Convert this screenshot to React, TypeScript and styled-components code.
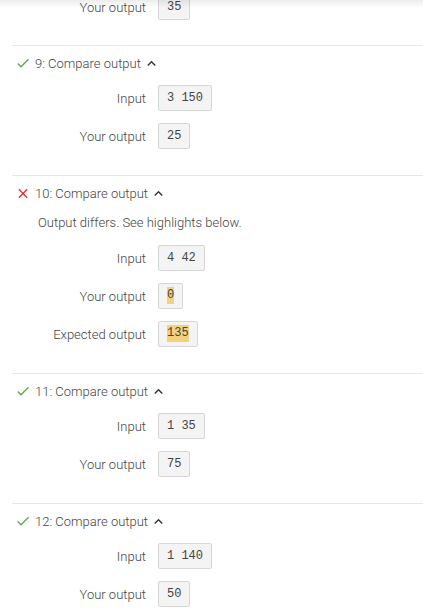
import styled, { createGlobalStyle } from "styled-components";

type Row = { label: string; value: string; highlight?: boolean };

interface TestCase {
  id: number;
  passed: boolean;
  message?: string;
  rows: Row[];
}

const tests: TestCase[] = [
  {
    id: 9,
    passed: true,
    rows: [
      { label: "Input", value: "3 150" },
      { label: "Your output", value: "25" },
    ],
  },
  {
    id: 10,
    passed: false,
    message: "Output differs. See highlights below.",
    rows: [
      { label: "Input", value: "4 42" },
      { label: "Your output", value: "0", highlight: true },
      { label: "Expected output", value: "135", highlight: true },
    ],
  },
  {
    id: 11,
    passed: true,
    rows: [
      { label: "Input", value: "1 35" },
      { label: "Your output", value: "75" },
    ],
  },
  {
    id: 12,
    passed: true,
    rows: [
      { label: "Input", value: "1 140" },
      { label: "Your output", value: "50" },
    ],
  },
];

const CheckIcon = () => (
  <svg width="16" height="16" viewBox="0 0 24 24">
    <path d="M9 16.17L4.83 12l-1.42 1.41L9 19 21 7l-1.41-1.41z" fill="#5cae4f" />
  </svg>
);

const CrossIcon = () => (
  <svg width="17" height="17" viewBox="0 0 24 24">
    <path
      d="M19 6.41L17.59 5 12 10.59 6.41 5 5 6.41 10.59 12 5 17.59 6.41 19 12 13.41 17.59 19 19 17.59 13.41 12z"
      fill="#ec2b2b"
    />
  </svg>
);

const ChevronUp = () => (
  <svg width="17" height="17" viewBox="0 0 24 24">
    <path d="M7.41 15.41L12 10.83l4.59 4.58L18 14l-6-6-6 6z" fill="#333" />
  </svg>
);

function ResultRows({ rows }: { rows: Row[] }) {
  return (
    <RowGrid>
      {rows.map((r) => [
        <RowLabel key={r.label + "-l"}>{r.label}</RowLabel>,
        <ValueBox key={r.label + "-v"}>
          {r.highlight ? <Mark>{r.value}</Mark> : r.value}
        </ValueBox>,
      ])}
    </RowGrid>
  );
}

export default function App() {
  return (
    <>
      <GlobalStyle />
      <TopShadow />
      <Page>
        {/* 위에서 잘린 이전 테스트의 마지막 줄 */}
        <Tail>
          <ResultRows rows={[{ label: "Your output", value: "35" }]} />
        </Tail>
        {tests.map((t) => (
          <Section key={t.id}>
            <Header>
              <IconSlot>{t.passed ? <CheckIcon /> : <CrossIcon />}</IconSlot>
              <HeaderText>{t.id}: Compare output</HeaderText>
              <ChevronUp />
            </Header>
            {t.message && <Message>{t.message}</Message>}
            <ResultRows rows={t.rows} />
          </Section>
        ))}
      </Page>
    </>
  );
}

const GlobalStyle = createGlobalStyle`
  body {
    margin: 0;
    background: #fff;
    font-family: Roboto, "Liberation Sans", Arial, sans-serif;
    font-size: 13px;
    font-weight: 300;
    color: #444;
    overflow: hidden;
  }
`;

const TopShadow = styled.div`
  position: fixed;
  top: 0;
  left: 0;
  right: 0;
  height: 8px;
  background: linear-gradient(rgba(0, 0, 0, 0.07), rgba(0, 0, 0, 0));
  pointer-events: none;
`;

const Page = styled.div`
  width: 100%;
  margin-top: -6px;
`;

const Tail = styled.div`
  margin-left: 12px;
  padding: 0 0 25px 3px;

  & > div {
    margin-top: 0;
  }
`;

const Section = styled.div`
  margin-left: 12px;
  border-top: 1px solid #e6e6e6;
  padding: 7px 0 26px 3px;
`;

const Header = styled.div`
  display: flex;
  align-items: center;
  height: 20px;
`;

const IconSlot = styled.span`
  display: flex;
  align-items: center;
  justify-content: center;
  width: 16px;
  margin-right: 4px;
`;

const HeaderText = styled.span`
  margin-right: 2px;
`;

const Message = styled.div`
  margin-top: 10px;
  padding-left: 23px;
  line-height: 20px;
`;

const RowGrid = styled.div`
  display: grid;
  grid-template-columns: 131px auto;
  column-gap: 12px;
  row-gap: 12px;
  margin-top: 12px;
`;

const RowLabel = styled.div`
  text-align: right;
  align-self: center;
`;

const ValueBox = styled.div`
  justify-self: start;
  box-sizing: border-box;
  height: 26px;
  line-height: 24px;
  padding: 0 8px;
  border: 1px solid #d6d6d6;
  border-radius: 2px;
  background: #f4f4f4;
  font-family: "Liberation Mono", "Courier New", monospace;
  font-size: 12px;
  font-weight: 400;
  color: #444;
  white-space: pre;
`;

const Mark = styled.span`
  display: inline-block;
  height: 17px;
  line-height: 17px;
  vertical-align: middle;
  background: #f4d27a;
`;
